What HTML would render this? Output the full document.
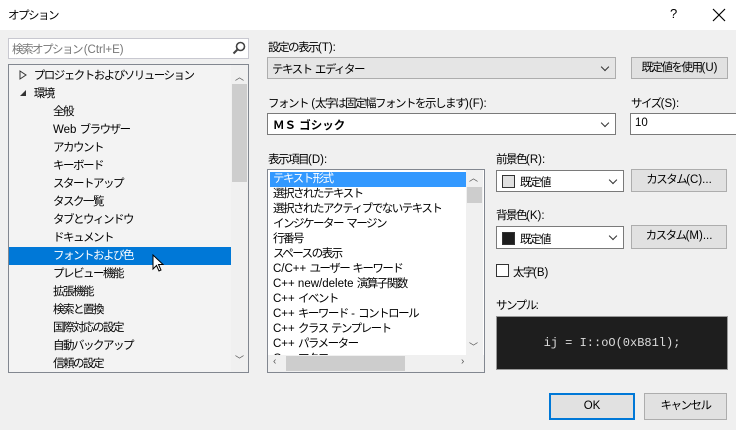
<!DOCTYPE html>
<html><head><meta charset="utf-8"><style>
*{box-sizing:border-box;margin:0;padding:0}
body{width:736px;height:430px;background:#f0f0f0;font-family:"Liberation Sans","Noto Sans CJK JP",sans-serif;font-size:11.5px;letter-spacing:-1.5px;color:#000;position:relative;overflow:hidden}
.a{position:absolute}
.title{left:0;top:0;width:736px;height:30px;background:#fff}
.box{border:1px solid #adadad;background:#fff}
.btn{border:1px solid #adadad;background:#e1e1e1;text-align:center;line-height:21px}
.chev{position:absolute;right:7px;top:6px;width:6px;height:6px;border-right:1px solid #333;border-bottom:1px solid #333;transform:rotate(45deg)}
.tree div{height:18px;line-height:18px;white-space:nowrap}
.list div{height:15px;line-height:15px;padding-left:3px;white-space:nowrap}
i.L,span.L{font-style:normal;letter-spacing:0}
</style></head><body>
<div class="a title"></div>
<div class="a" style="left:8px;top:7px">オプション</div>
<div class="a" style="left:670px;top:6px;font-size:13px">?</div>
<svg class="a" style="left:712px;top:8px" width="14" height="14"><path d="M1 1L13 13M13 1L1 13" stroke="#000" stroke-width="1.2"/></svg>

<div class="a box" style="left:8px;top:38px;width:241px;height:21px;border-color:#c8c8d0"></div>
<div class="a" style="left:12px;top:41px;color:#777">検索オプション <i class="L">(Ctrl+E)</i></div>
<svg class="a" style="left:232px;top:41px" width="14" height="14"><circle cx="8.5" cy="5.5" r="4" fill="none" stroke="#444" stroke-width="1.6"/><line x1="5.5" y1="8.5" x2="1.5" y2="12.5" stroke="#444" stroke-width="2"/></svg>

<div class="a" style="left:8px;top:64px;width:241px;height:309px;border:1px solid #828790;background:#f3f3f3;overflow:hidden">
<div class="a tree" style="left:0;top:2px;width:222px">
<div style="padding-left:10px"><svg width="8" height="10" style="vertical-align:-1px"><path d="M1 1L7 5L1 9Z" fill="none" stroke="#333"/></svg>&nbsp;&nbsp;&nbsp; プロジェクトおよびソリューション</div>
<div style="padding-left:10px"><svg width="8" height="10" style="vertical-align:-1px"><path d="M7 2L7 8L1 8Z" fill="#333"/></svg>&nbsp;&nbsp;&nbsp; 環境</div>
<div style="padding-left:44px">全般</div>
<div style="padding-left:44px"><i class="L">Web </i>ブラウザー</div>
<div style="padding-left:44px">アカウント</div>
<div style="padding-left:44px">キーボード</div>
<div style="padding-left:44px">スタートアップ</div>
<div style="padding-left:44px">タスク一覧</div>
<div style="padding-left:44px">タブとウィンドウ</div>
<div style="padding-left:44px">ドキュメント</div>
<div style="padding-left:44px;background:#0078d7;color:#fff">フォントおよび色</div>
<div style="padding-left:44px">プレビュー機能</div>
<div style="padding-left:44px">拡張機能</div>
<div style="padding-left:44px">検索と置換</div>
<div style="padding-left:44px">国際対応の設定</div>
<div style="padding-left:44px">自動バックアップ</div>
<div style="padding-left:44px">信頼の設定</div>
</div>
<div class="a" style="left:222px;top:0;width:17px;height:307px;background:#f0f0f0"></div>
<div class="a" style="left:223px;top:19px;width:15px;height:98px;background:#cdcdcd"></div>
<div class="a" style="left:226px;top:5px;font-size:9px;color:#555">︿</div>
<div class="a" style="left:226px;top:288px;font-size:9px;color:#555">﹀</div>
</div>
<svg class="a" style="left:152px;top:254px" width="14" height="20"><path d="M1 1 L1 15 L4.5 11.5 L7 17 L9 16 L6.5 10.5 L11 10.5 Z" fill="#fff" stroke="#000"/></svg>

<div class="a" style="left:268px;top:39px">設定の表示<i class="L">(T):</i></div>
<div class="a box" style="left:267px;top:57px;width:349px;height:22px;background:#e5e5e5;border-color:#adadad"><span style="position:absolute;left:4px;top:3px">テキスト<i class="L"> </i>エディター</span><i class="chev"></i></div>
<div class="a btn" style="left:631px;top:57px;width:97px;height:22px">既定値を使用<i class="L">(U)</i></div>

<div class="a" style="left:268px;top:95px">フォント<i class="L"> (</i>太字は固定幅フォントを示します<i class="L">)(F):</i></div>
<div class="a box" style="left:267px;top:113px;width:349px;height:22px;border-color:#7a7a7a"><b style="position:absolute;left:5px;top:3px;letter-spacing:0">ＭＳ ゴシック</b><i class="chev"></i></div>
<div class="a" style="left:631px;top:95px">サイズ<i class="L">(S):</i></div>
<div class="a box" style="left:630px;top:113px;width:110px;height:22px;border-color:#7a7a7a"><span class="L" style="position:absolute;left:4px;top:3px">10</span></div>

<div class="a" style="left:268px;top:151px">表示項目<i class="L">(D):</i></div>
<div class="a" style="left:267px;top:169px;width:218px;height:204px;border:1px solid #828790;background:#fff;overflow:hidden">
<div class="a list" style="left:2px;top:2px;width:196px">
<div style="background:#3399ff;color:#fff">テキスト形式</div>
<div>選択されたテキスト</div>
<div>選択されたアクティブでないテキスト</div>
<div>インジケーター<i class="L"> </i>マージン</div>
<div>行番号</div>
<div>スペースの表示</div>
<div><i class="L">C/C++ </i>ユーザー<i class="L"> </i>キーワード</div>
<div><i class="L">C++ new/delete </i>演算子関数</div>
<div><i class="L">C++ </i>イベント</div>
<div><i class="L">C++ </i>キーワード<i class="L"> - </i>コントロール</div>
<div><i class="L">C++ </i>クラス<i class="L"> </i>テンプレート</div>
<div><i class="L">C++ </i>パラメーター</div>
<div><i class="L">C++ </i>マクロ</div>
</div>
<div class="a" style="left:198px;top:0;width:17px;height:186px;background:#f0f0f0"></div>
<div class="a" style="left:199px;top:17px;width:15px;height:16px;background:#cdcdcd"></div>
<div class="a" style="left:0;top:185px;width:216px;height:17px;background:#f0f0f0"></div>
<div class="a" style="left:18px;top:186px;width:119px;height:15px;background:#cdcdcd"></div>
<div class="a" style="left:201px;top:1px;font-size:9px;color:#555">︿</div>
<div class="a" style="left:201px;top:170px;font-size:9px;color:#555">﹀</div>
<div class="a" style="left:5px;top:186px;font-size:10px;color:#555">‹</div>
<div class="a" style="left:193px;top:186px;font-size:10px;color:#555">›</div>
</div>

<div class="a" style="left:496px;top:151px">前景色<i class="L">(R):</i></div>
<div class="a box" style="left:496px;top:170px;width:128px;height:22px;border-color:#7a7a7a"><span style="position:absolute;left:5px;top:4px;width:13px;height:13px;border:1px solid #333;background:#e0e0e0"></span><span style="position:absolute;left:23px;top:3px">既定値</span><i class="chev"></i></div>
<div class="a btn" style="left:631px;top:169px;width:96px;height:23px">カスタム<i class="L">(C)...</i></div>

<div class="a" style="left:496px;top:207px">背景色<i class="L">(K):</i></div>
<div class="a box" style="left:496px;top:226px;width:128px;height:23px;border-color:#7a7a7a"><span style="position:absolute;left:5px;top:5px;width:13px;height:13px;border:1px solid #333;background:#1e1e1e"></span><span style="position:absolute;left:23px;top:4px">既定値</span><i class="chev"></i></div>
<div class="a btn" style="left:631px;top:225px;width:96px;height:24px">カスタム<i class="L">(M)...</i></div>

<div class="a" style="left:496px;top:264px;width:13px;height:13px;border:1px solid #333;background:#fff"></div>
<div class="a" style="left:513px;top:264px">太字<i class="L">(B)</i></div>

<div class="a" style="left:496px;top:297px">サンプル<i class="L">:</i></div>
<div class="a" style="left:496px;top:316px;width:232px;height:54px;background:#1e1e1e;border:1px solid #999;color:#dcdcdc;font-family:'Liberation Mono',monospace;font-size:12px;letter-spacing:0;text-align:center;line-height:52px">ij = I::oO(0xB81l);</div>

<div class="a btn" style="left:549px;top:393px;width:86px;height:27px;border:2px solid #0078d7;line-height:23px;letter-spacing:0">OK</div>
<div class="a btn" style="left:644px;top:393px;width:83px;height:27px;line-height:25px">キャンセル</div>
</body></html>
